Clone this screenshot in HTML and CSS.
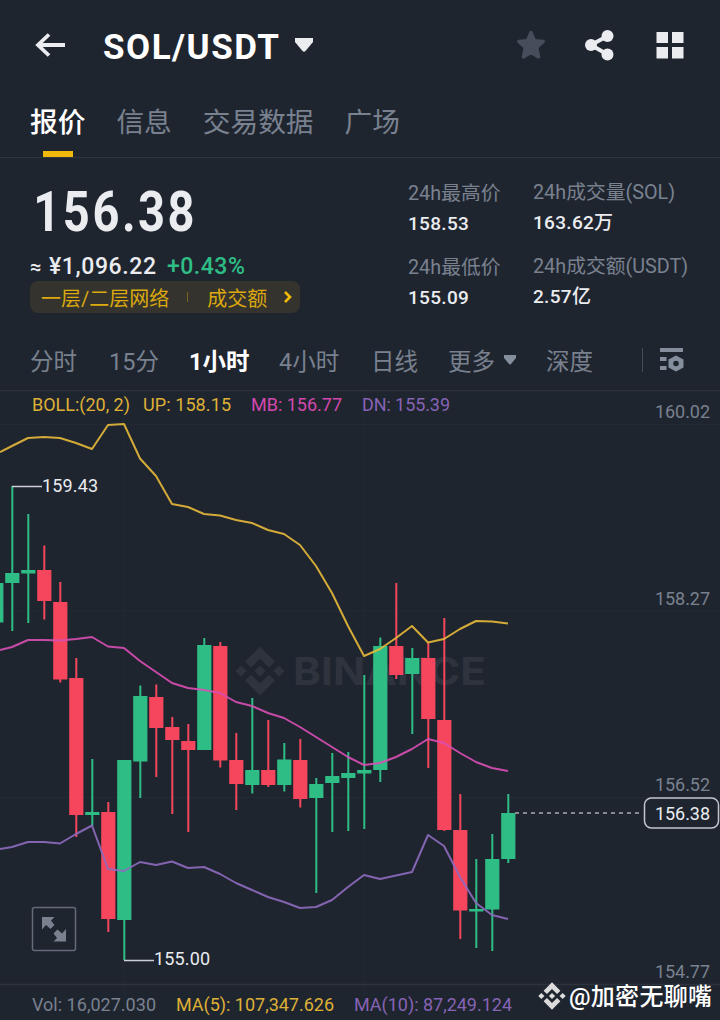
FILE: index.html
```html
<!DOCTYPE html>
<html lang="zh-CN">
<head>
    <meta charset="utf-8">
    <title>SOL/USDT</title>
    <link rel="stylesheet" href="styles.css">
</head>
<body>
    <div class="header">
        <svg class="back" width="32" height="26" viewBox="0 0 32 26">
            <path d="M31 13H4M15 2.5L4 13l11 10.5" fill="none" stroke="#eaecef" stroke-width="3.8"/>
        </svg>
        <h1>SOL/USDT</h1>
        <svg class="caret" width="20" height="16" viewBox="0 0 20 16">
            <path d="M1 1h18v4l-7.5 9q-1.5 1.5-3 0L1 5z" fill="#eaecef"/>
        </svg>
        <div class="actions">
            <svg width="32" height="32" viewBox="0 0 32 32">
                <path d="M17 3.500l3.500 8.200 8.700.8-6.600 6 2 9.400L17 23.200l-7.600 4.700 2-9.400-6.600-6 8.700-.8z" fill="#474d5b" stroke="#474d5b" stroke-width="3.500" stroke-linejoin="round"/>
            </svg>
            <svg width="32" height="32" viewBox="0 0 32 32">
                <path d="M23.500 7L7 16l16.500 9.500" fill="none" stroke="#eaecef" stroke-width="4"/>
                <circle cx="23.500" cy="7" r="6" fill="#eaecef"/>
                <circle cx="7" cy="16" r="6" fill="#eaecef"/>
                <circle cx="23.500" cy="25.500" r="6" fill="#eaecef"/>
            </svg>
            <svg width="32" height="32" viewBox="0 0 32 32">
                <path d="M2.500 3H14v11H2.500zM18 3h11.500v11H18zM2.500 18H14v11.500H2.500zM18 18h11.500v11.500H18z" fill="#eaecef"/>
            </svg>
        </div>
    </div>

    <div class="tabs">
        <span class="tab active">报价</span>
        <span class="tab">信息</span>
        <span class="tab">交易数据</span>
        <span class="tab">广场</span>
    </div>

    <div class="summary">
        <div class="quote">
            <div class="price">156.38</div>
            <div class="fiat"><span class="approx">≈</span><span class="cny">¥1,096.22</span><span class="change">+0.43%</span></div>
            <div class="badge">
                <span>一层/二层网络</span>
                <i class="sep"></i>
                <span>成交额</span>
                <svg width="10" height="14" viewBox="0 0 10 14"><path d="M2 2l5 5-5 5" fill="none" stroke="#f0b90b" stroke-width="2.6"/></svg>
            </div>
        </div>
        <div class="stats">
            <div class="stat"><label>24h最高价</label><b>158.53</b></div>
            <div class="stat"><label>24h最低价</label><b>155.09</b></div>
        </div>
        <div class="stats wide">
            <div class="stat"><label>24h成交量(SOL)</label><b>163.62万</b></div>
            <div class="stat"><label>24h成交额(USDT)</label><b>2.57亿</b></div>
        </div>
    </div>

    <div class="periods">
        <span class="p-line">分时</span>
        <span class="p-15">15分</span>
        <span class="p-1h active">1小时</span>
        <span class="p-4h">4小时</span>
        <span class="p-day">日线</span>
        <span class="p-more">更多<svg width="14" height="12" viewBox="0 0 14 12"><path d="M1 1h12v3L8 10q-1 1-2 0L1 4z" fill="#848e9c"/></svg></span>
        <span class="p-depth">深度</span>
        <i class="divider"></i>
        <svg class="settings" width="24" height="24" viewBox="0 0 24 24">
            <path d="M0 0h23v4H0zM0 9h6.500v4H0zM0 18h6.500v4H0z" fill="#848e9c"/>
            <path d="M16 7.500l7.500 4v8l-7.500 4-7.500-4v-8zM16 12.700a2.800 2.800 0 1 0 0 5.600 2.800 2.800 0 0 0 0-5.600z" fill="#848e9c" fill-rule="evenodd"/>
        </svg>
    </div>

    <svg class="chart" width="720" height="630" viewBox="0 390 720 630">
        <defs>
            <g id="logo">
                <path d="M-15-9.500L0-24.500l15 15-6 6L0-12.500-9-3.500zM-15 9.500L0 24.500l15-15-6-6L0 12.500-9 3.500z"/>
                <path d="M-24.500 0l5.500-5.500L-13.500 0-19 5.500zM13.500 0L19-5.500 24.500 0 19 5.500zM-5.500 0L0-5.500 5.500 0 0 5.500z"/>
            </g>
        </defs>
        <g class="grid">
            <path d="M0 424.500H720M0 611H720M0 797.500H720M124 391V1005M364 391V1005"/>
            <path class="frame" d="M0 390.500H720M0 984.500H720"/>
        </g>
        <g class="watermark">
            <use href="#logo" x="260" y="671"/>
            <text x="293" y="685" textLength="193" lengthAdjust="spacingAndGlyphs">BINANCE</text>
        </g>
        <g id="candles"></g>
        <polyline class="line up" points="0,452 12,446 28,438 44,437 60,438 76,443 92,449 108,425 124,424 140,458.5 156,476 172,504 188,507 204,514 220,515.5 236,520 252,523 268,530 284,534 300,545 316,566 332,593 348,626 364,656 380,649 396,638 412,626 428,642.5 444,639 460,629 476,621 492,621.5 508,623.5"/>
        <polyline class="line mb" points="0,650 12,647 28,640 44,640 60,640.5 76,639 92,637 108,646.5 124,648 140,661 156,672 172,683 188,688 204,690 220,693 236,702 252,706 268,713 284,718 300,727 316,737 332,747 348,757 364,765 380,763 396,757 412,749 428,739 444,743 460,753 476,762 492,768 508,771"/>
        <polyline class="line dn" points="0,849 12,847 28,842 44,842 60,843.5 76,834 92,825.5 108,869 124,871 140,862 156,865 172,861.5 188,868 204,867 220,874 236,883 252,890 268,897 284,902 300,908 316,907 332,900 348,887 364,875 380,879 396,875.5 412,872 428,835 444,846 460,877 476,903 492,915 508,919"/>
        <g class="legend">
            <text class="c-up" x="32" y="411" textLength="98">BOLL:(20, 2)</text>
            <text class="c-up" x="143" y="411" textLength="88">UP: 158.15</text>
            <text class="c-mb" x="251" y="411" textLength="91">MB: 156.77</text>
            <text class="c-dn" x="362" y="411" textLength="88">DN: 155.39</text>
            <text class="c-vol" x="32" y="1011" textLength="124">Vol: 16,027.030</text>
            <text class="c-up" x="176" y="1011" textLength="158">MA(5): 107,347.626</text>
            <text class="c-dn" x="354" y="1011" textLength="158">MA(10): 87,249.124</text>
        </g>
        <g class="axis">
            <text x="655" y="418" textLength="55">160.02</text>
            <text x="655" y="605" textLength="55">158.27</text>
            <text x="655" y="791" textLength="55">156.52</text>
            <text x="655" y="978" textLength="55">154.77</text>
        </g>
        <g class="marks">
            <path d="M12 486.500H42M124 960.500H154"/>
            <text x="42" y="492" textLength="56">159.43</text>
            <text x="154" y="965" textLength="56">155.00</text>
            <path class="dash" d="M515 813H640"/>
            <rect x="644.500" y="798" width="74" height="30" rx="7"/>
            <text x="655" y="820" textLength="55">156.38</text>
        </g>
        <g class="expand">
            <rect x="32.500" y="907.500" width="43" height="43" rx="2"/>
            <path d="M42 917h12.500l-3.500 3.500 3.500 4.500-4 4-4.500-4-4 4.500zM66 941.500H53.500l3.500-3.500-3.500-4.500 4-4 4.500 4 4-4.500z"/>
        </g>
        <g class="author">
            <use href="#logo" transform="translate(552 996) scale(.56)"/>
            <text x="569" y="1005" textLength="143">@加密无聊嘴</text>
        </g>
    </svg>

    <script>
        // x, high, body top, body bottom, low, rising
        const candles = [
            [-4, 583, 583, 622.5, 622.5, 1],
            [12, 486, 573, 583, 631, 1],
            [28, 514, 570, 573.5, 623, 1],
            [44, 545.5, 570, 601, 619.5, 0],
            [60, 582, 602, 679.5, 682.5, 0],
            [76, 658, 678, 815, 837, 0],
            [92, 759, 812, 815, 826, 1],
            [108, 802, 812, 919, 932, 0],
            [124, 760, 760, 920, 960, 1],
            [140, 685.5, 696, 761.5, 798, 1],
            [156, 684.5, 697, 728, 777, 0],
            [172, 717, 727, 740, 814, 0],
            [188, 724, 741, 750, 832, 0],
            [204, 638, 645, 750, 750, 1],
            [220, 642, 646, 760.5, 767.5, 0],
            [236, 733, 760, 784, 810, 0],
            [252, 698, 770, 785, 793.5, 1],
            [268, 720, 770, 785, 787, 0],
            [284, 743, 759.5, 785, 791.5, 1],
            [300, 739, 760, 799, 807.5, 0],
            [316, 778, 784, 798, 893, 1],
            [332, 753, 776, 783, 832, 1],
            [348, 752, 773, 778, 831, 1],
            [364, 675, 770, 773.5, 829, 1],
            [380, 637.5, 646, 770, 782, 1],
            [396, 583, 646, 675, 679, 0],
            [412, 648, 658, 674, 734, 1],
            [428, 643, 658, 719, 768, 0],
            [444, 618, 720, 830, 831, 0],
            [460, 794, 830, 910.5, 939, 0],
            [476, 859, 909, 911.5, 948, 1],
            [492, 834, 859, 909.5, 951, 1],
            [508, 794, 813, 859, 863, 1]
        ];

        document.getElementById("candles").innerHTML = candles.map(([x, high, top, bottom, low, rising]) =>
            `<path class="${rising ? "rise" : "fall"}" d="M${x - 0.7} ${high}h2V${low}h-2zM${x - 6.8} ${top}h14.2V${bottom}h-14.2z"/>`
        ).join("");
    </script>
</body>
</html>
```

FILE: styles.css
```css
body {
    margin: 0;
    width: 720px;
    height: 1020px;
    overflow: hidden;
    background: #1f252f;
    color: #eaecef;
    font-family: Roboto, "Noto Sans CJK SC", sans-serif;
}

svg {
    display: block;
    flex: none;
}

.header {
    display: flex;
    align-items: center;
    height: 90px;
    padding: 0 34px;
}

h1 {
    margin: 4px 0 0 37px;
    width: 177px;
    font-size: 35px;
    font-weight: 700;
    letter-spacing: 1.5px;
    color: #fff;
    white-space: nowrap;
}

.caret {
    margin-left: 14px;
}

.actions {
    display: flex;
    gap: 38px;
    margin-left: auto;
}

.tabs {
    display: flex;
    gap: 31px;
    box-sizing: border-box;
    height: 68px;
    padding-left: 30px;
    border-bottom: 1px solid #303640;
    font-size: 27.7px;
    color: #79818f;
}

.tab {
    display: flex;
    flex-direction: column;
    align-items: center;
    height: 67px;
    line-height: 65px;
}

.tab.active {
    color: #fff;
    font-weight: 500;
}

.tab.active::after {
    content: "";
    width: 30px;
    height: 6px;
    margin-top: -4px;
    background: #f0b90b;
}

.summary {
    display: flex;
    height: 175px;
}

.quote {
    flex: none;
    width: 378px;
    padding-left: 30px;
}

.price {
    height: 92px;
    padding-left: 4px;
    line-height: 109px;
    font-size: 56px;
    font-weight: 700;
    letter-spacing: 3px;
    /* condensed digits */
    transform: scaleX(0.84);
    transform-origin: left;
}

.fiat {
    display: flex;
    height: 31px;
    line-height: 34px;
    font-size: 23px;
    font-weight: 500;
    white-space: nowrap;
}

.approx {
    width: 19px;
    font-size: 20px;
}

.cny {
    width: 118px;
    letter-spacing: 0.6px;
}

.change {
    letter-spacing: 0.5px;
    color: #2ebd85;
}

.badge {
    display: flex;
    align-items: center;
    box-sizing: border-box;
    width: 270px;
    height: 32px;
    padding: 0 11px;
    border-radius: 8px;
    background: #34332d;
    color: #dca90f;
    font-size: 20px;
    white-space: nowrap;
}

.sep {
    width: 1px;
    height: 10px;
    margin: 0 19px 0 18px;
    background: #776322;
}

.badge svg {
    margin-left: auto;
    margin-right: -4px;
}

.stats {
    flex: none;
    width: 125px;
    padding-top: 21px;
}

.stats.wide {
    width: 187px;
    padding-top: 20px;
}

.stat {
    display: flex;
    flex-direction: column;
    height: 74px;
    font-size: 19.8px;
    line-height: 30px;
    white-space: nowrap;
}

.stat label {
    color: #79818f;
}

.stat b {
    font-size: 19px;
    font-weight: 500;
    letter-spacing: 0.3px;
}

.periods {
    display: flex;
    align-items: center;
    box-sizing: border-box;
    height: 57px;
    padding: 0 0 4px 30px;
    color: #79818f;
    font-size: 23.5px;
    white-space: nowrap;
}

.periods .active {
    color: #fff;
    font-weight: 700;
}

.p-line { width: 79px; }
.p-15 { width: 80px; }
.p-1h { width: 90px; }
.p-4h { width: 92px; }
.p-day { width: 77px; }
.p-depth { width: 96px; }

.p-more {
    display: flex;
    align-items: center;
    gap: 8px;
    width: 98px;
}

.divider {
    width: 1px;
    height: 24px;
    margin-right: 17px;
    background: #474d57;
}

.grid path {
    stroke: #242a34;
    fill: none;
}

.grid .frame {
    stroke: #2d333d;
    stroke-width: 1.5;
}

.watermark {
    fill: #2e333d;
    font-family: Inter, sans-serif;
    font-size: 38px;
    font-weight: 700;
}

.rise { fill: #2ebd85; }
.fall { fill: #f6465d; }

.line {
    fill: none;
    stroke-width: 2;
    stroke-linejoin: round;
    opacity: 0.9;
}

.up { stroke: #e8b93a; }
.mb { stroke: #d94fb5; }
.dn { stroke: #8e6cc0; }

.legend,
.axis,
.marks {
    font-size: 18px;
}

.c-up { fill: #deb036; }
.c-mb { fill: #d248ae; }
.c-dn { fill: #8663b5; }
.c-vol,
.axis { fill: #79818f; }

.marks text {
    fill: #eaecef;
}

.marks path {
    stroke: #cdd0d6;
    stroke-width: 1.5;
}

.marks .dash {
    stroke-dasharray: 4 4;
    stroke: #a9adb5;
}

.marks rect {
    fill: #1f252f;
    stroke: #c3c6cc;
    stroke-width: 1.5;
}

.expand rect {
    fill: none;
    stroke: #636a78;
    stroke-width: 1.5;
}

.expand path {
    fill: #79818f;
}

.author {
    fill: #dcdcdc;
    font-size: 24px;
}

.author text {
    fill: #fff;
    font-weight: 500;
}
```
